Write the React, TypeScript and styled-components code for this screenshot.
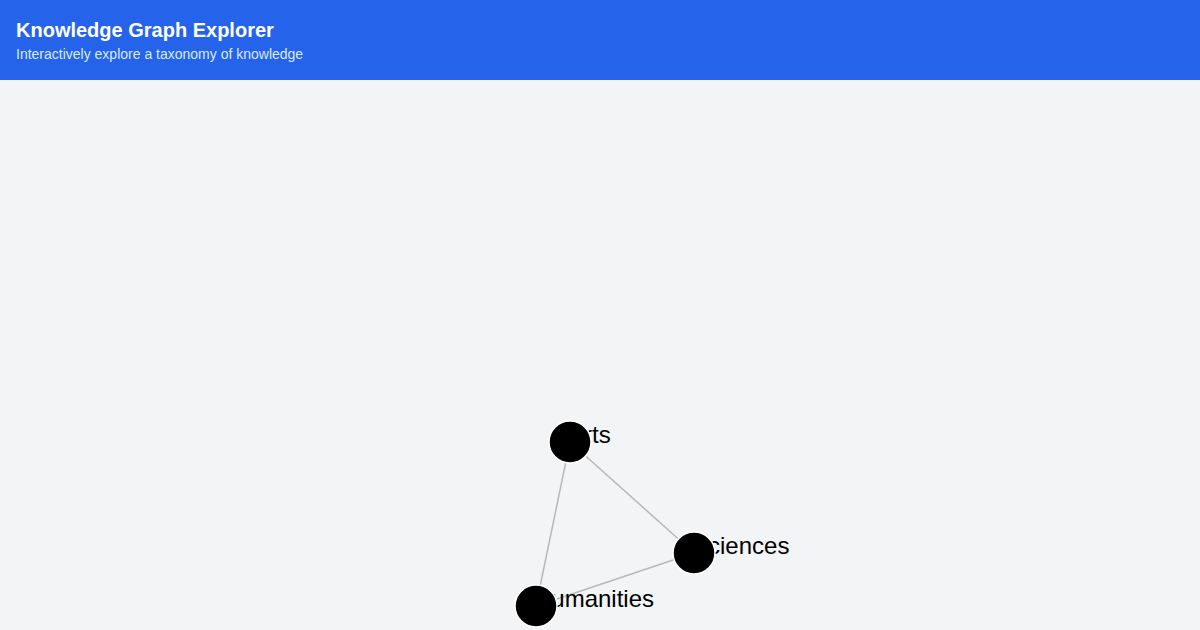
import styled, { createGlobalStyle } from "styled-components";

const GlobalStyle = createGlobalStyle`
  html, body {
    margin: 0;
    padding: 0;
    background: #f3f4f6;
    font-family: "Liberation Sans", Arial, sans-serif;
  }
`;

const Page = styled.div`
  display: flex;
  flex-direction: column;
  height: 630px;
  overflow: hidden;
`;

const Header = styled.header`
  background: #2563eb;
  color: #ffffff;
  padding: 16px;
`;

const Title = styled.h1`
  margin: 0;
  font-size: 20px;
  line-height: 28px;
  font-weight: 700;
`;

const Subtitle = styled.p`
  margin: 0;
  font-size: 14px;
  line-height: 20px;
  color: #dbeafe;
`;

const Canvas = styled.main`
  flex: 1;
  background: #f3f4f6;
`;

const Graph = styled.svg`
  display: block;
  width: 100%;
  height: 100%;
`;

const Label = styled.text`
  font-family: "Liberation Sans", Arial, sans-serif;
  font-size: 24px;
  fill: #000;
`;

type Node = { id: string; x: number; y: number };

const nodes: Node[] = [
  { id: "Arts", x: 570, y: 362 },
  { id: "Sciences", x: 694, y: 473 },
  { id: "Humanities", x: 536, y: 526 },
];

const links: [string, string][] = [
  ["Arts", "Sciences"],
  ["Arts", "Humanities"],
  ["Sciences", "Humanities"],
];

const byId = (id: string) => nodes.find((n) => n.id === id)!;

export default function App() {
  return (
    <>
      <GlobalStyle />
      <Page>
        <Header>
          <Title>Knowledge Graph Explorer</Title>
          <Subtitle>Interactively explore a taxonomy of knowledge</Subtitle>
        </Header>
        <Canvas>
          <Graph viewBox="0 0 1200 550">
            <g stroke="#b8b8b8" strokeWidth={1.5}>
              {links.map(([a, b]) => {
                const s = byId(a);
                const t = byId(b);
                return <line key={a + b} x1={s.x} y1={s.y} x2={t.x} y2={t.y} />;
              })}
            </g>
            {nodes.map((n) => (
              <Label key={n.id + "l"} x={n.x - 2} y={n.y + 1}>
                {n.id}
              </Label>
            ))}
            {nodes.map((n) => (
              <circle key={n.id} cx={n.x} cy={n.y} r={21} fill="#000" stroke="#fff" strokeWidth={1.5} />
            ))}
          </Graph>
        </Canvas>
      </Page>
    </>
  );
}
